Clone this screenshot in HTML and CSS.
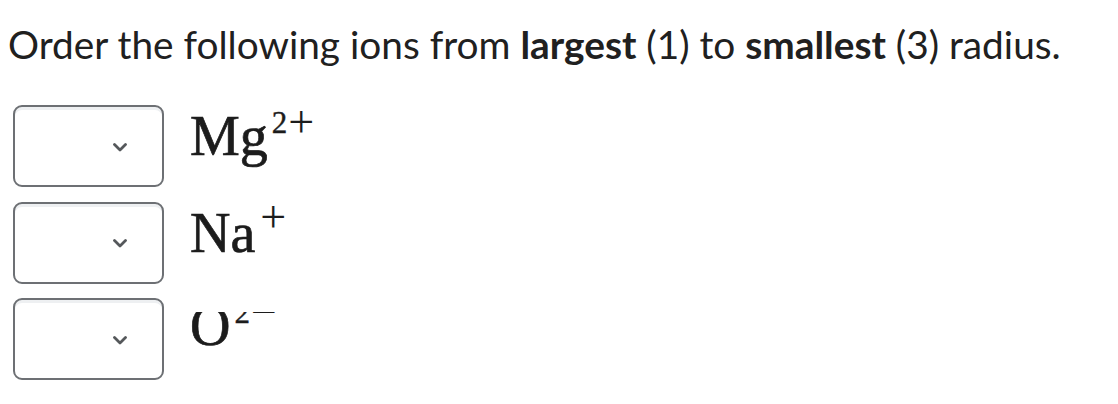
FILE: index.html
```html
<!DOCTYPE html>
<html lang="en">
<head>
<meta charset="utf-8">
<title>Ionic radius ordering</title>
<link rel="stylesheet" href="styles.css">
</head>
<body>
<main class="question">
  <p class="prompt">Order the following ions from <strong>largest</strong> (1) to <strong>smallest</strong> (3) radius.</p>
  <ol class="answers">
    <li class="answer">
      <div class="select" role="combobox" aria-label="Rank for Mg2+">
        <svg class="chevron" viewBox="0 0 14 9" aria-hidden="true"><path d="M1.5 1.5 L7 7 L12.5 1.5"/></svg>
      </div>
      <span class="ion">Mg<sup class="charge">2<span class="sign">+</span></sup></span>
    </li>
    <li class="answer">
      <div class="select" role="combobox" aria-label="Rank for Na+">
        <svg class="chevron" viewBox="0 0 14 9" aria-hidden="true"><path d="M1.5 1.5 L7 7 L12.5 1.5"/></svg>
      </div>
      <span class="ion">Na<sup class="charge-single">+</sup></span>
    </li>
    <li class="answer">
      <div class="select" role="combobox" aria-label="Rank for O2-">
        <svg class="chevron" viewBox="0 0 14 9" aria-hidden="true"><path d="M1.5 1.5 L7 7 L12.5 1.5"/></svg>
      </div>
      <span class="ion-window"><span class="ion ion-scrolled">O<sup class="charge">2<span class="sign">&minus;</span></sup></span></span>
    </li>
  </ol>
</main>
</body>
</html>
```

FILE: styles.css
```css
html, body {
  margin: 0;
  padding: 0;
  background: #ffffff;
}

.question {
  padding: 0 8px;
  color: #222222;
}

.prompt {
  margin: 22px 0 0 0;
  font-family: "Lato", "Liberation Sans", sans-serif;
  font-size: 38.8px;
  line-height: 44px;
  color: #202020;
}

.prompt strong {
  font-weight: 700;
}

.answers {
  list-style: none;
  margin: 39px 0 0 5px;
  padding: 0;
  display: flex;
  flex-direction: column;
  gap: 14.5px;
}

.answer {
  display: flex;
  align-items: flex-start;
  gap: 26px;
  height: 82px;
}

.select {
  box-sizing: border-box;
  width: 151px;
  height: 82px;
  border: 2px solid #6d7074;
  border-radius: 9px;
  background: #ffffff;
  box-shadow: inset 0 3px 0 #eef0f2;
  display: flex;
  align-items: center;
  justify-content: flex-end;
  padding-right: 35px;
  flex: none;
}

.chevron {
  width: 14px;
  height: 9px;
  margin-top: 2px;
}

.chevron path {
  fill: none;
  stroke: #55585b;
  stroke-width: 2.8;
  stroke-linecap: round;
  stroke-linejoin: round;
}

.ion {
  display: block;
  font-family: "Liberation Serif", "Times New Roman", serif;
  font-size: 56px;
  line-height: 56px;
  color: #1c1c1c;
  -webkit-text-stroke: 0.7px #1c1c1c;
  margin-top: 3px;
  white-space: nowrap;
}

.charge {
  font-size: 31px;
  line-height: 0;
  vertical-align: 22px;
  margin-left: 4px;
  -webkit-text-stroke: 0.4px #1c1c1c;
}

.sign {
  font-size: 46px;
  vertical-align: -4px;
  margin-left: 1px;
  -webkit-text-stroke: 0;
}

.charge-single {
  font-size: 46px;
  line-height: 0;
  margin-left: 5px;
  vertical-align: 20px;
  -webkit-text-stroke: 0;
}

/* third ion sits in a short scrolled viewport that cuts off its top */
.ion-window {
  display: block;
  overflow: hidden;
  margin-top: 14px;
  height: 56px;
}

.ion-scrolled {
  margin-top: -14px;
}
```
